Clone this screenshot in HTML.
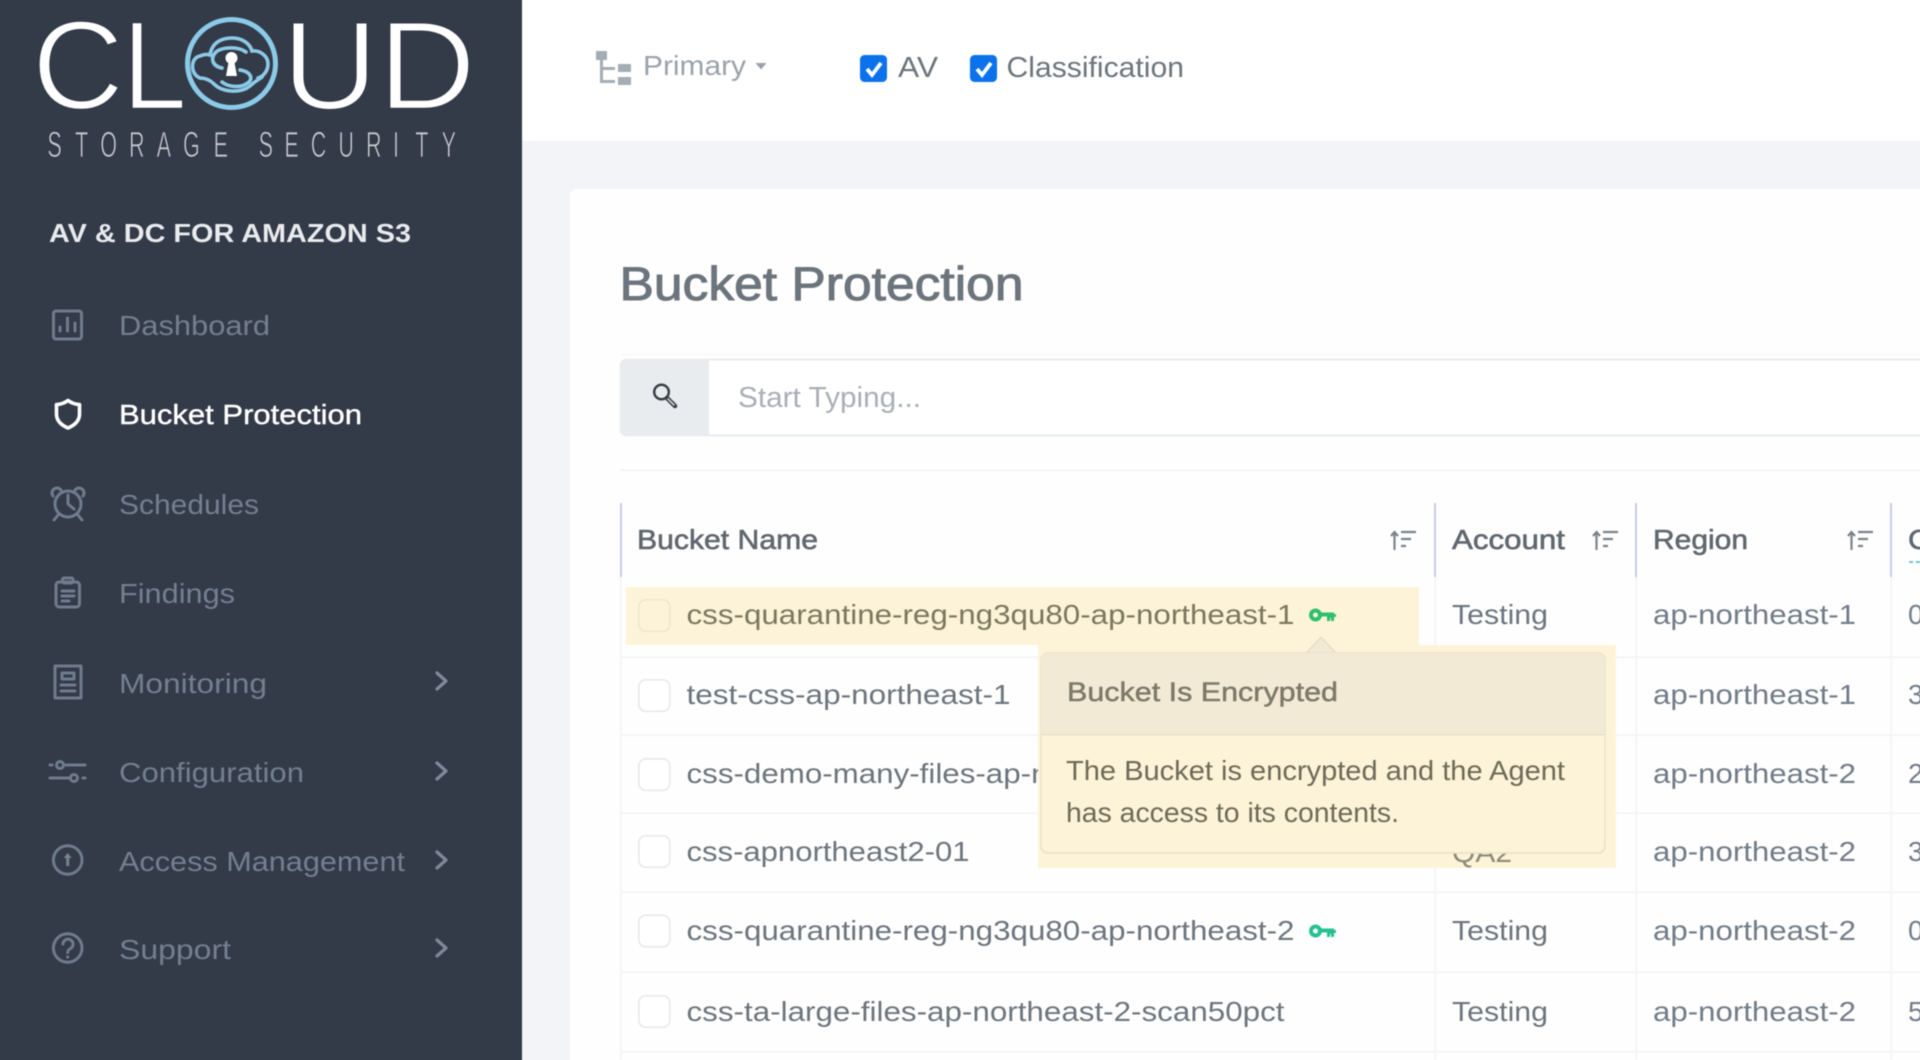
<!DOCTYPE html>
<html lang="en">
<head>
<meta charset="utf-8">
<title>Bucket Protection</title>
<style>
html,body{margin:0;padding:0;width:1920px;height:1060px;overflow:hidden;background:#f2f4f7}
#wrap{position:absolute;left:0;top:0;width:1920px;height:1060px;overflow:hidden}
svg{display:block;position:absolute;left:-10px;top:-10px;filter:blur(.45px)}
text{font-family:"Liberation Sans",sans-serif}
.nav{font-size:28px;fill:#73808f}
.cell{font-size:28px;fill:#6c757d}
.reg{font-size:28px;fill:#717c88}
.th{font-size:28px;fill:#5f676f;stroke:#5f676f;stroke-width:.6}
.ic{fill:none;stroke:#6f7c8c;stroke-width:3;stroke-linecap:round;stroke-linejoin:round}
.chev{fill:none;stroke:#7e8b9a;stroke-width:3.2;stroke-linecap:round;stroke-linejoin:round}
.cb{fill:#fff;stroke:#e7e9ec;stroke-width:1.6}
.sort{fill:none;stroke:#7b838b;stroke-width:2.2}
.logo{font-size:126px;fill:#fff;stroke:#333a48;stroke-width:2.4}
</style>
</head>
<body>
<div id="wrap">
<svg width="1940" height="1080" viewBox="-10 -10 1940 1080" xmlns="http://www.w3.org/2000/svg">
  <!-- backgrounds -->
  <rect x="-10" y="-10" width="1940" height="1080" fill="#f2f4f7"/>
  <rect x="522" y="-10" width="1408" height="151" fill="#fff"/>
  <rect x="570" y="189" width="1370" height="900" rx="7" fill="#fefefe"/>

  <!-- sidebar -->
  <rect x="-10" y="-10" width="532" height="1080" fill="#333a48"/>

  <!-- logo -->
  <text class="logo" x="32" y="109" textLength="92" lengthAdjust="spacingAndGlyphs">C</text>
  <text class="logo" x="122" y="109" textLength="65" lengthAdjust="spacingAndGlyphs">L</text>
  <circle cx="231.500" cy="63.500" r="44" fill="none" stroke="#8ccbe8" stroke-width="5"/>
  <g fill="none" stroke="#8ccbe8" stroke-width="3.600" stroke-linecap="round">
    <path d="M200 78C190 74 190 58 200 56C204 54 207 54 210 55C212 42 222 38 232 38C243 38 250 44 252 51C260 50 268 56 268 64C268 72 262 77 258 78"/>
    <path d="M200 78C206 78 210 80 214 84C222 92 240 94 250 86C254 82 258 80 262 77"/>
    <path d="M222 68C212 66 210 58 216 52C222 47 238 46 246 52"/>
    <path d="M240 70C252 72 254 80 246 84C240 88 228 87 222 82"/>
  </g>
  <circle cx="231.500" cy="58" r="6" fill="#fff"/>
  <polygon points="229,60 234,60 237,76 226,76" fill="#fff"/>
  <text class="logo" x="282" y="109" textLength="96" lengthAdjust="spacingAndGlyphs">U</text>
  <text class="logo" x="378" y="109" textLength="98" lengthAdjust="spacingAndGlyphs">D</text>
  <g transform="scale(.6,1)">
    <text y="157" font-size="36" fill="#c6cad0" stroke="#333a48" stroke-width=".8" text-anchor="middle" x="91 136 181 228 273 319 368 406 443 486 531 577 623 660 703 748">STORAGE SECURITY</text>
  </g>
  <text x="49" y="242" font-size="26" font-weight="700" fill="#e9ebee" textLength="362" lengthAdjust="spacingAndGlyphs">AV &amp; DC FOR AMAZON S3</text>

  <!-- nav text -->
  <text class="nav" x="119" y="335" textLength="151" lengthAdjust="spacingAndGlyphs">Dashboard</text>
  <text class="nav" x="119" y="424" textLength="243" lengthAdjust="spacingAndGlyphs" style="fill:#fff;stroke:#fff;stroke-width:.4">Bucket Protection</text>
  <text class="nav" x="119" y="514" textLength="140" lengthAdjust="spacingAndGlyphs">Schedules</text>
  <text class="nav" x="119" y="603" textLength="116" lengthAdjust="spacingAndGlyphs">Findings</text>
  <text class="nav" x="119" y="693" textLength="148" lengthAdjust="spacingAndGlyphs">Monitoring</text>
  <text class="nav" x="119" y="782" textLength="185" lengthAdjust="spacingAndGlyphs">Configuration</text>
  <text class="nav" x="119" y="871" textLength="286" lengthAdjust="spacingAndGlyphs">Access Management</text>
  <text class="nav" x="119" y="959" textLength="112" lengthAdjust="spacingAndGlyphs">Support</text>

  <!-- nav icons -->
  <rect class="ic" x="53.500" y="311" width="28" height="28" rx="2.500"/>
  <path class="ic" d="M60 331v-4M67.500 331v-13M75 331v-8"/>
  <path d="M68 400.500C63 404 59 404.500 56.500 404.500V414C56.500 421 62 425.500 68 428C74 425.500 79.500 421 79.500 414V404.500C77 404.500 73 404 68 400.500Z" fill="none" stroke="#fff" stroke-width="3.600" stroke-linejoin="round"/>
  <circle class="ic" cx="68" cy="504" r="13"/>
  <path class="ic" d="M68 495v9l6 5M53 496a5 5 0 0 1 8-6M83 496a5 5 0 0 0-8-6M58 515l-4 5M78 515l4 5"/>
  <rect class="ic" x="56" y="582" width="23.500" height="25" rx="3"/>
  <rect class="ic" x="62.500" y="578" width="10.500" height="5" rx="1.500"/>
  <path class="ic" d="M62 591h12M62 596h12M62 601h7"/>
  <rect class="ic" x="55" y="666" width="26" height="32"/>
  <rect class="ic" x="62" y="673" width="12" height="6"/>
  <path class="ic" d="M61 685h14M61 691h14"/>
  <path class="ic" d="M50 765h2M66 765h19M50 778h19M83 778h2"/>
  <circle class="ic" cx="60" cy="765" r="3.500"/>
  <circle class="ic" cx="74" cy="778" r="3.500"/>
  <circle class="ic" cx="67.700" cy="860" r="14.300"/>
  <path d="M67.700 853l4 5h-2.500v8h-3v-8h-2.500z" fill="#77848f"/>
  <circle class="ic" cx="67.700" cy="948" r="14.300"/>
  <path class="ic" d="M63 944a5 5 0 1 1 7.500 4.500c-2 1.200-2.800 2-2.800 4"/>
  <circle cx="67.700" cy="957" r="1.500" fill="#77848f"/>

  <!-- chevrons -->
  <path class="chev" d="M437 673l9 8-9 8"/>
  <path class="chev" d="M437 763l9 8-9 8"/>
  <path class="chev" d="M437 852l9 8-9 8"/>
  <path class="chev" d="M437 940l9 8-9 8"/>

  <!-- top bar -->
  <g fill="#a3adb5">
    <rect x="596" y="51" width="11" height="9"/>
    <rect x="618" y="64" width="13" height="8"/>
    <rect x="618" y="77" width="13" height="8"/>
    <rect x="600" y="60" width="3" height="23"/>
    <rect x="600" y="67" width="15" height="3"/>
    <rect x="600" y="80" width="15" height="3"/>
  </g>
  <text x="643" y="75" font-size="28" fill="#99a3ab" textLength="103" lengthAdjust="spacingAndGlyphs">Primary</text>
  <polygon points="755.500,63 766.500,63 761,69.500" fill="#99a3ab"/>
  <rect x="860" y="55" width="27" height="27" rx="4.500" fill="#0b72ec"/>
  <path d="M867 69l5 6 9-12" fill="none" stroke="#fff" stroke-width="3.800"/>
  <text x="898" y="77" font-size="29" fill="#6c757d" textLength="40" lengthAdjust="spacingAndGlyphs">AV</text>
  <rect x="970" y="55" width="27" height="27" rx="4.500" fill="#0b72ec"/>
  <path d="M977 69l5 6 9-12" fill="none" stroke="#fff" stroke-width="3.800"/>
  <text x="1006.500" y="77" font-size="29" fill="#6c757d" textLength="177.500" lengthAdjust="spacingAndGlyphs">Classification</text>

  <!-- heading -->
  <text x="619.500" y="300" font-size="47" fill="#6c757d" stroke="#6c757d" stroke-width="1" textLength="404" lengthAdjust="spacingAndGlyphs">Bucket Protection</text>

  <!-- search -->
  <rect x="620" y="354" width="1310" height="1" fill="#f8f8f9"/>
  <rect x="620.500" y="359.500" width="1320" height="76" rx="6" fill="#fff" stroke="#e4e7ea" stroke-width="1.500"/>
  <path d="M626 359H709V436H626A6 6 0 0 1 620 430V365A6 6 0 0 1 626 359Z" fill="#e9ecef"/>
  <circle cx="661.500" cy="392" r="7.300" fill="none" stroke="#3a3f44" stroke-width="2.500"/>
  <path d="M667 398l8 8" stroke="#3a3f44" stroke-width="4.500" stroke-linecap="round"/>
  <path d="M668 399l6 6" stroke="#e9ecef" stroke-width="1.400" stroke-linecap="round"/>
  <text x="738" y="407" font-size="29" fill="#a8afb6" textLength="183" lengthAdjust="spacingAndGlyphs">Start Typing...</text>
  <rect x="620" y="469.500" width="1310" height="1.500" fill="#f1f2f4"/>

  <!-- table grid -->
  <g fill="#f2f3f5">
    <rect x="620" y="577" width="1.500" height="493"/>
    <rect x="1434.500" y="577" width="1.500" height="493"/>
    <rect x="1635.500" y="577" width="1.500" height="493"/>
    <rect x="1890.500" y="577" width="1.500" height="493"/>
    <rect x="620" y="656.500" width="1310" height="1.500"/>
    <rect x="620" y="734.500" width="1310" height="1.500"/>
    <rect x="620" y="812.500" width="1310" height="1.500"/>
    <rect x="620" y="891.500" width="1310" height="1.500"/>
    <rect x="620" y="971.500" width="1310" height="1.500"/>
    <rect x="620" y="1051" width="1310" height="1.500"/>
  </g>
  <g fill="#c8cbea">
    <rect x="620" y="503" width="2" height="74"/>
    <rect x="1434" y="503" width="2" height="74"/>
    <rect x="1635" y="503" width="2" height="74"/>
    <rect x="1890" y="503" width="2" height="74"/>
  </g>

  <!-- table head -->
  <text class="th" x="637" y="549" textLength="181" lengthAdjust="spacingAndGlyphs">Bucket Name</text>
  <text class="th" x="1452" y="549" textLength="113" lengthAdjust="spacingAndGlyphs">Account</text>
  <text class="th" x="1653" y="549" textLength="95" lengthAdjust="spacingAndGlyphs">Region</text>
  <text class="th" x="1908" y="549" textLength="22" lengthAdjust="spacingAndGlyphs">C</text>
  <path d="M1909 562h11" stroke="#45b5c4" stroke-width="1.500" stroke-dasharray="4 3"/>
  <path class="sort" d="M1394.500 550v-18M1391 536l3.500-4 3.500 4M1401 532h15M1401 539h10M1401 546h5"/>
  <path class="sort" d="M1596.500 550v-18M1593 536l3.500-4 3.500 4M1603 532h15M1603 539h10M1603 546h5"/>
  <path class="sort" d="M1851.500 550v-18M1848 536l3.500-4 3.500 4M1858 532h15M1858 539h10M1858 546h5"/>

  <!-- highlights -->
  <rect x="626" y="587" width="793" height="58" fill="#fdf3d8"/>

  <!-- checkboxes -->
  <rect class="cb" x="638.800" y="599.800" width="31" height="31.500" rx="7" style="fill:#fdf3d8;stroke:#efe7cd"/>
  <rect class="cb" x="638.800" y="679.800" width="31" height="31.500" rx="7"/>
  <rect class="cb" x="638.800" y="758.800" width="31" height="31.500" rx="7"/>
  <rect class="cb" x="638.800" y="835.800" width="31" height="31.500" rx="7"/>
  <rect class="cb" x="638.800" y="915.300" width="31" height="31.500" rx="7"/>
  <rect class="cb" x="638.800" y="995.800" width="31" height="31.500" rx="7"/>

  <!-- bucket names -->
  <text class="cell" x="686.500" y="624" textLength="608" lengthAdjust="spacingAndGlyphs" style="fill:#7b775f">css-quarantine-reg-ng3qu80-ap-northeast-1</text>
  <text class="cell" x="686.500" y="704" textLength="324" lengthAdjust="spacingAndGlyphs">test-css-ap-northeast-1</text>
  <text class="cell" x="686.500" y="783" textLength="503" lengthAdjust="spacingAndGlyphs">css-demo-many-files-ap-northeast-2</text>
  <text class="cell" x="686.500" y="861" textLength="283" lengthAdjust="spacingAndGlyphs">css-apnortheast2-01</text>
  <text class="cell" x="686.500" y="940" textLength="608" lengthAdjust="spacingAndGlyphs">css-quarantine-reg-ng3qu80-ap-northeast-2</text>
  <text class="cell" x="686.500" y="1021" textLength="598" lengthAdjust="spacingAndGlyphs">css-ta-large-files-ap-northeast-2-scan50pct</text>

  <!-- keys -->
  <g fill="none" stroke="#2fbf6e" stroke-width="4">
    <circle cx="1315.500" cy="615" r="4.500"/>
    <path d="M1320 614.500h14"/>
  </g>
  <path d="M1327 614h9v3h-2v4h-3v-3h-1v3h-3z" fill="#2fbf6e"/>
  <g fill="none" stroke="#27c190" stroke-width="4">
    <circle cx="1315.500" cy="931" r="4.500"/>
    <path d="M1320 930.500h14"/>
  </g>
  <path d="M1327 930h9v3h-2v4h-3v-3h-1v3h-3z" fill="#27c190"/>

  <!-- account + region -->
  <text class="cell" x="1452" y="624" textLength="96" lengthAdjust="spacingAndGlyphs">Testing</text>
  <text class="cell" x="1452" y="940" textLength="96" lengthAdjust="spacingAndGlyphs">Testing</text>
  <text class="cell" x="1452" y="1021" textLength="96" lengthAdjust="spacingAndGlyphs">Testing</text>
  <text class="reg" x="1653" y="624" textLength="203" lengthAdjust="spacingAndGlyphs">ap-northeast-1</text>
  <text class="reg" x="1653" y="704" textLength="203" lengthAdjust="spacingAndGlyphs">ap-northeast-1</text>
  <text class="reg" x="1653" y="783" textLength="203" lengthAdjust="spacingAndGlyphs">ap-northeast-2</text>
  <text class="reg" x="1653" y="861" textLength="203" lengthAdjust="spacingAndGlyphs">ap-northeast-2</text>
  <text class="reg" x="1653" y="940" textLength="203" lengthAdjust="spacingAndGlyphs">ap-northeast-2</text>
  <text class="reg" x="1653" y="1021" textLength="203" lengthAdjust="spacingAndGlyphs">ap-northeast-2</text>
  <text class="reg" x="1908" y="624">0</text>
  <text class="reg" x="1908" y="704">3</text>
  <text class="reg" x="1908" y="783">2</text>
  <text class="reg" x="1908" y="861">3</text>
  <text class="reg" x="1908" y="940">0</text>
  <text class="reg" x="1908" y="1021">5</text>

  <!-- popover -->
  <rect x="1038" y="645" width="578" height="223" fill="#fdf3d8"/>
  <text class="cell" x="1452" y="862" textLength="60" lengthAdjust="spacingAndGlyphs" style="fill:#8c8a78">QA2</text>
  <polygon points="1306,653 1321,637.500 1336,653" fill="#f3ead5" stroke="#e6dcc2" stroke-width="1.300" stroke-linejoin="round"/>
  <rect x="1041" y="653" width="564" height="200" rx="7" fill="#fdf3d8" stroke="#e9e0c6" stroke-width="1.400"/>
  <path d="M1041 734V660A7 7 0 0 1 1048 653H1598A7 7 0 0 1 1605 660V734Z" fill="#f3ead5"/>
  <rect x="1041" y="734" width="564" height="1.400" fill="#e9e0c6"/>
  <text x="1067" y="701" font-size="27" fill="#7d7a6a" stroke="#7d7a6a" stroke-width=".5" textLength="271" lengthAdjust="spacingAndGlyphs">Bucket Is Encrypted</text>
  <text x="1066" y="780" font-size="28" fill="#6e6a58" textLength="499" lengthAdjust="spacingAndGlyphs">The Bucket is encrypted and the Agent</text>
  <text x="1066" y="822" font-size="28" fill="#6e6a58" textLength="333" lengthAdjust="spacingAndGlyphs">has access to its contents.</text>
</svg>
</div>
</body>
</html>
